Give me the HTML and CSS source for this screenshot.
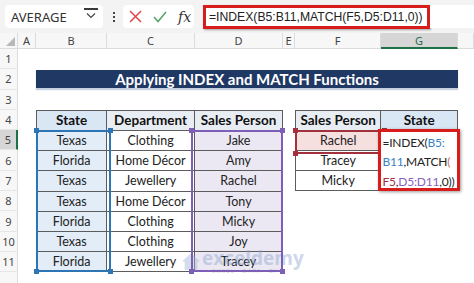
FILE: index.html
```html
<!DOCTYPE html>
<html>
<head>
<meta charset="utf-8">
<title>Applying INDEX and MATCH Functions</title>
<link rel="stylesheet" href="styles.css">
</head>
<body>

<!-- formula bar strip -->
<div class="toolbar">
  <div class="namebox">
    <span>AVERAGE</span>
    <span class="chev">
      <svg width="10" height="7" viewBox="0 0 10 7"><path d="M1 1.5 L5 5.5 L9 1.5" fill="none" stroke="#444" stroke-width="1.2"/></svg>
    </span>
  </div>
  <div class="dots"><i></i><i></i><i></i></div>
  <div class="fnbox">
    <svg width="13" height="13" viewBox="0 0 13 13"><path d="M1 1 L12 12 M12 1 L1 12" stroke="#e0464c" stroke-width="1.5"/></svg>
    <svg width="14" height="12" viewBox="0 0 14 12"><path d="M1 6 L5 10.5 L13 1" fill="none" stroke="#55a56a" stroke-width="1.5"/></svg>
    <span class="fx">fx</span>
  </div>
  <div class="formula">=INDEX(B5:B11,MATCH(F5,D5:D11,0))</div>
  <div class="filler"></div>
</div>

<!-- the sheet -->
<div class="sheet">
  <div class="corner"><span class="tri"></span></div>
  <div class="colhead">A</div>
  <div class="colhead">B</div>
  <div class="colhead">C</div>
  <div class="colhead">D</div>
  <div class="colhead">E</div>
  <div class="colhead">F</div>
  <div class="colhead active">G</div>
  <div class="colhead"></div>

  <div class="rowhead" style="grid-row: 2">1</div>
  <div class="rowhead" style="grid-row: 3">2</div>
  <div class="rowhead" style="grid-row: 4">3</div>
  <div class="rowhead" style="grid-row: 5">4</div>
  <div class="rowhead active" style="grid-row: 6">5</div>
  <div class="rowhead" style="grid-row: 7">6</div>
  <div class="rowhead" style="grid-row: 8">7</div>
  <div class="rowhead" style="grid-row: 9">8</div>
  <div class="rowhead" style="grid-row: 10">9</div>
  <div class="rowhead" style="grid-row: 11">10</div>
  <div class="rowhead" style="grid-row: 12">11</div>
  <div class="rowhead" style="grid-row: 13"></div>

  <div class="title"><div class="title-bar">Applying INDEX and MATCH Functions</div></div>

  <!-- data table B4:D11 -->
  <div class="data">
    <div class="th state">State</div>
    <div class="th">Department</div>
    <div class="th">Sales Person</div>

    <div class="td blue">Texas</div><div class="td">Clothing</div><div class="td purple">Jake</div>
    <div class="td blue">Florida</div><div class="td">Home Décor</div><div class="td purple">Amy</div>
    <div class="td blue">Texas</div><div class="td">Jewellery</div><div class="td purple">Rachel</div>
    <div class="td blue">Texas</div><div class="td">Home Décor</div><div class="td purple">Tony</div>
    <div class="td blue">Florida</div><div class="td">Clothing</div><div class="td purple">Micky</div>
    <div class="td blue">Texas</div><div class="td">Clothing</div><div class="td purple">Joy</div>
    <div class="td blue">Florida</div><div class="td">Jewellery</div><div class="td purple">Tracey</div>

    <div class="sel sel-b"><i class="h tl"></i><i class="h tr"></i><i class="h bl"></i><i class="h br"></i></div>
    <div class="sel sel-d"><i class="h tl"></i><i class="h tr"></i><i class="h bl"></i><i class="h br"></i></div>
  </div>

  <!-- lookup table F4:G7 -->
  <div class="lookup">
    <div class="th">Sales Person</div>
    <div class="th state">State</div>
    <div class="td red">Rachel</div>
    <div class="edit">
      <div>=INDEX(<span class="rb">B5:</span></div>
      <div><span class="rb">B11</span>,MATCH<span class="rr">(</span></div>
      <div><span class="rf">F5</span>,<span class="rp">D5:D11</span>,0))</div>
    </div>
    <div class="td">Tracey</div>
    <div class="td">Micky</div>
    <div class="sel sel-f"><i class="h tl"></i><i class="h tr"></i><i class="h bl"></i><i class="h br"></i></div>
  </div>

  <div class="mark">
    <svg width="20" height="19" viewBox="0 0 22 20"><path d="M1 10 L11 1 L21 10 L18 10 L18 19 L4 19 L4 10 Z" fill="#9fb6d6"/></svg>
    <div class="mark-text">
      <span class="mark-name">exceldemy</span>
      <span class="mark-sub">EXCEL · DATA · BI</span>
    </div>
  </div>
</div>

</body>
</html>
```

FILE: styles.css
```css
/** page **/
body {
  margin: 0;
  width: 474px;
  height: 283px;
  overflow: hidden;
  background: #ffffff;
  font-family: Lato, "Liberation Sans", sans-serif;
}

/** formula bar strip **/
.toolbar {
  display: flex;
  align-items: center;
  height: 33px;
  padding-left: 5px;
  background: #f3f3f3;
  box-sizing: border-box;
  font-family: "Noto Sans", "Open Sans", sans-serif;
}

.namebox {
  display: flex;
  align-items: center;
  justify-content: space-between;
  width: 98px;
  height: 23px;
  padding: 0 5px 0 6px;
  box-sizing: border-box;
  background: #ffffff;
  border-radius: 4px;
  font-size: 13px;
  color: #333333;
}

.chev {
  display: flex;
  flex-direction: column;
  align-items: center;
  padding-top: 2px;
  border-top: 2px solid #3a3a3a;
  margin-top: -7px;
  width: 14px;
}

.dots {
  display: flex;
  flex-direction: column;
  gap: 2px;
  margin: 0 8px 0 10px;
}
.dots i {
  width: 2px;
  height: 2px;
  background: #444444;
}

.fnbox {
  display: flex;
  align-items: center;
  gap: 11px;
  width: 71px;
  height: 23px;
  padding-left: 6px;
  box-sizing: border-box;
  background: #ffffff;
  border-radius: 4px;
}

.fx {
  font-family: "DejaVu Serif", "Liberation Serif", serif;
  font-style: italic;
  font-size: 14px;
  color: #333333;
}

.formula {
  display: flex;
  align-items: center;
  margin-left: 9px;
  width: 227px;
  height: 24px;
  padding-left: 3px;
  box-sizing: border-box;
  background: #ffffff;
  border: 3px solid #d81c1c;
  box-shadow: 1px 1px 2px rgba(0, 0, 0, 0.35);
  font-family: "Liberation Sans", Arial, sans-serif;
  font-size: 12.2px;
  color: #222222;
  white-space: nowrap;
}

.filler {
  flex: 1;
  height: 23px;
  background: #ffffff;
}

/** the sheet grid **/
.sheet {
  position: relative;
  display: grid;
  grid-template-columns: 18px 18px 71px 88px 88px 12px 86px 77px 1fr;
  grid-template-rows: 16px repeat(12, 20.3px);
  font-size: 12.5px;
  color: #222222;
}

.corner {
  display: flex;
  align-items: flex-end;
  justify-content: flex-end;
  padding: 0 2px 2px 0;
  background: #f7f7f7;
  border-right: 1px solid #dcdcdc;
  border-bottom: 1px solid #dcdcdc;
}
.tri {
  width: 0;
  height: 0;
  border-left: 9px solid transparent;
  border-bottom: 9px solid #b8b8b8;
}

.colhead {
  display: flex;
  align-items: center;
  justify-content: center;
  background: #f7f7f7;
  border-right: 1px solid #dcdcdc;
  border-bottom: 1px solid #dcdcdc;
  font-family: "Noto Sans", sans-serif;
  font-size: 11px;
  color: #444444;
}
.colhead.active {
  background: #d6d6d6;
  border-bottom: 2px solid #1e7145;
  color: #2b6b45;
}

.rowhead {
  grid-column: 1;
  display: flex;
  align-items: center;
  justify-content: center;
  background: #f7f7f7;
  border-right: 1px solid #dcdcdc;
  border-bottom: 1px solid #e6e6e6;
  font-family: "Noto Sans", sans-serif;
  font-size: 11px;
  color: #444444;
}
.rowhead.active {
  background: #d6d6d6;
  border-right: 2px solid #1e7145;
}

/** title in row 2 **/
.title {
  grid-column: 3 / 9;
  grid-row: 3;
  padding-top: 1px;
}
.title-bar {
  height: 18px;
  line-height: 18px;
  background: #203864;
  box-shadow: 0 2px 1px #c4cfe0;
  color: #ffffff;
  font-weight: bold;
  font-size: 15px;
  text-align: center;
}

/** tables **/
.data,
.lookup {
  position: relative;
  display: grid;
  gap: 1px;
  padding: 1px;
  background: #5c5c5c;
  grid-auto-rows: minmax(0, 1fr);
}
.data {
  grid-column: 3 / 6;
  grid-row: 5 / 13;
  grid-template-columns: 70fr 88fr 88fr;
}
.lookup {
  grid-column: 7 / 9;
  grid-row: 5 / 9;
  grid-template-columns: 86fr 77fr;
}

.th,
.td {
  display: flex;
  align-items: center;
  justify-content: center;
  background: #ffffff;
  white-space: nowrap;
}
.th {
  background: #e8edf3;
  font-weight: bold;
  font-size: 13.5px;
  color: #111111;
}
.th.state { background: #d9e6f3; }
.td.blue { background: #e3edf8; }
.td.purple { background: #ece8f3; }
.td.red { background: #f6dfdf; }

/** range highlights, drawn over the cells **/
.sel {
  position: absolute;
  z-index: 2;
  border: 2px solid #2e75b6;
  pointer-events: none;
}
.sel-b { left: 0; top: 12.5%; width: 71px; bottom: 0; }
.sel-d { right: 0; top: 12.5%; width: 88px; bottom: 0; border-color: #7e5fb8; }
.sel-f { left: 0; top: 25%; width: 86px; height: 25%; border-color: #a3303d; }

.h {
  position: absolute;
  width: 5px;
  height: 5px;
  background-color: #2e75b6;
}
.sel-d .h { background-color: #7e5fb8; }
.sel-f .h { background-color: #a3303d; }
.h.tl { left: -4px; top: -4px; }
.h.tr { right: -4px; top: -4px; }
.h.bl { left: -4px; bottom: -4px; }
.h.br { right: -4px; bottom: -4px; }

/** cell being edited **/
.edit {
  grid-column: 2;
  grid-row: 2 / 5;
  z-index: 3;
  margin: -2px -3px -1px -3px;
  padding: 1px 0 0 1px;
  background: #ffffff;
  border: 3px solid #d81c1c;
  box-shadow: 1px 1px 3px rgba(0, 0, 0, 0.4);
  font-size: 12px;
  line-height: 19.5px;
  letter-spacing: -0.2px;
  white-space: nowrap;
}
.rb { color: #3b7fc4; }
.rr { color: #d46a5a; }
.rf { color: #a3303d; }
.rp { color: #8a62c0; }

/** watermark **/
.mark {
  position: absolute;
  left: 181px;
  top: 216px;
  display: flex;
  align-items: center;
  gap: 1px;
  opacity: 0.45;
  pointer-events: none;
}
.mark-text {
  display: flex;
  flex-direction: column;
  line-height: 1;
}
.mark-name {
  font-family: "Open Sans", sans-serif;
  font-weight: bold;
  font-size: 19px;
  color: #8fa9d0;
}
.mark-sub {
  font-size: 6px;
  letter-spacing: 1px;
  color: #9a9a9a;
  padding-left: 10px;
}
```
